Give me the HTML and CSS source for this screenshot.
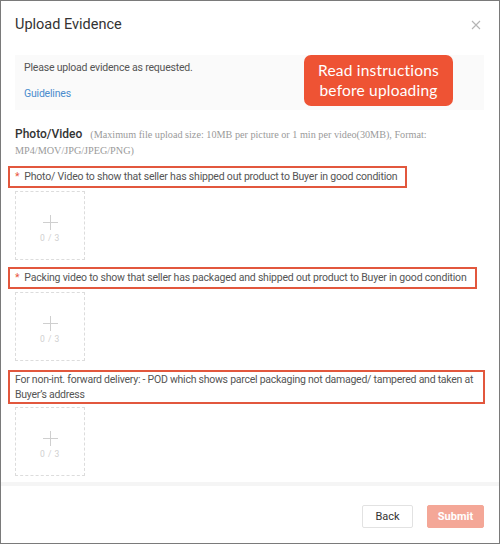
FILE: index.html
```html
<!DOCTYPE html>
<html>
<head>
<meta charset="utf-8">
<link rel="stylesheet" href="styles.css">
</head>
<body>
<div class="frame">
  <div class="header">
    <h1 class="title">Upload Evidence</h1>
    <svg class="close" width="10" height="10" viewBox="0 0 10 10"><path d="M1 1L9 9M9 1L1 9" stroke="#b5b5b5" stroke-width="1.1" fill="none"/></svg>
  </div>
  <div class="content">
    <div class="info">
      <div class="info-text">
        <div class="info-line">Please upload evidence as requested.</div>
        <a class="guide">Guidelines</a>
      </div>
      <div class="callout">Read instructions<br>before uploading</div>
    </div>
    <div class="section-head"><span class="sec-title">Photo/Video</span><span class="sec-note">(Maximum file upload size: 10MB per picture or 1 min per video(30MB), Format: MP4/MOV/JPG/JPEG/PNG)</span></div>

    <div class="req"><span class="star">*</span>Photo/ Video to show that seller has shipped out product to Buyer in good condition</div>
    <div class="upload"><span class="plus"></span><span class="count">0 / 3</span></div>

    <div class="req req2"><span class="star">*</span>Packing video to show that seller has packaged and shipped out product to Buyer in good condition</div>
    <div class="upload"><span class="plus"></span><span class="count">0 / 3</span></div>

    <div class="req req3">For non-int. forward delivery: - POD which shows parcel packaging not damaged/ tampered and taken at Buyer’s address</div>
    <div class="upload"><span class="plus"></span><span class="count">0 / 3</span></div>
  </div>
  <div class="footer">
    <button class="btn back">Back</button>
    <button class="btn submit">Submit</button>
  </div>
</div>
</body>
</html>
```
FILE: styles.css
```css
* { box-sizing: border-box; }
body { margin: 0; background: #fff; font-family: Roboto, "Liberation Sans", sans-serif; color: #333; }
.frame { width: 500px; height: 544px; border: 1px solid #7a7a7a; display: flex; flex-direction: column; overflow: hidden; }
.header { display: flex; justify-content: space-between; align-items: center; padding: 14px 18px 0 14px; height: 33px; flex: none; }
.title { margin: 0; font-size: 14.5px; font-weight: 400; line-height: 20px; color: #333; }
.content { padding: 21px 15px 6px 14px; border-bottom: 4px solid #f5f5f5; flex: none; }
.info { background: #fafafa; height: 55px; display: flex; justify-content: space-between; align-items: flex-start; }
.info-text { padding: 5px 0 0 9px; font-size: 10.5px; letter-spacing: -0.2px; line-height: 16px; color: #555; }
.guide { display: block; margin-top: 10px; color: #4b8ccd; }
.callout { width: 149px; height: 51px; margin-right: 31px; background: #ee5334; border-radius: 7px; color: #fff; font-family: Lato, "Noto Sans", sans-serif; font-size: 15.5px; line-height: 20px; text-align: center; padding-top: 5px; letter-spacing: 0.2px; }
.section-head { margin-top: 17px; font-family: "Liberation Serif", serif; font-size: 10.2px; line-height: 16px; }
.sec-title { font-family: Roboto, "Liberation Sans", sans-serif; font-size: 12px; line-height: 1; font-weight: 500; color: #333; margin-right: 8px; }
.sec-note { line-height: 1; color: #9a9a9a; }
.req { margin: 7px 0 0 -7px; width: fit-content; border: 2px solid #e2573d; padding: 1px 8px 1px 5px; font-size: 10.5px; letter-spacing: -0.2px; line-height: 16px; color: #555; }
.req2 { margin-top: 7px; }
.req3 { margin-top: 9px; width: auto; margin-right: -1px; padding: 0 2px 0 5px; letter-spacing: -0.25px; line-height: 15px; }
.star { color: #e8573d; margin-right: 5px; }
.upload { margin-top: 3px; width: 70px; height: 69px; border: 1px dashed #dcdcdc; display: flex; flex-direction: column; align-items: center; padding-top: 23px; }
.req3 + .upload { margin-top: 3px; }
.plus { position: relative; width: 15px; height: 15px; display: block; }
.plus::before, .plus::after { content: ""; position: absolute; background: #cfcfcf; }
.plus::before { left: 7px; top: 0; width: 1px; height: 15px; }
.plus::after { top: 7px; left: 0; width: 15px; height: 1px; }
.count { margin-top: 3px; font-size: 8.5px; color: #d0d0d0; letter-spacing: 0.5px; }
.footer { display: flex; justify-content: flex-end; gap: 14px; padding: 19px 15px 0 0; }
.btn { font-family: Roboto, "Liberation Sans", sans-serif; font-size: 11px; height: 23px; border-radius: 2px; cursor: pointer; }
.back { width: 51px; background: #fff; border: 1px solid #e2e2e2; color: #333; }
.submit { width: 57px; background: #f4a797; border: 1px solid #f4a797; color: #fff; font-weight: 700; }
```
